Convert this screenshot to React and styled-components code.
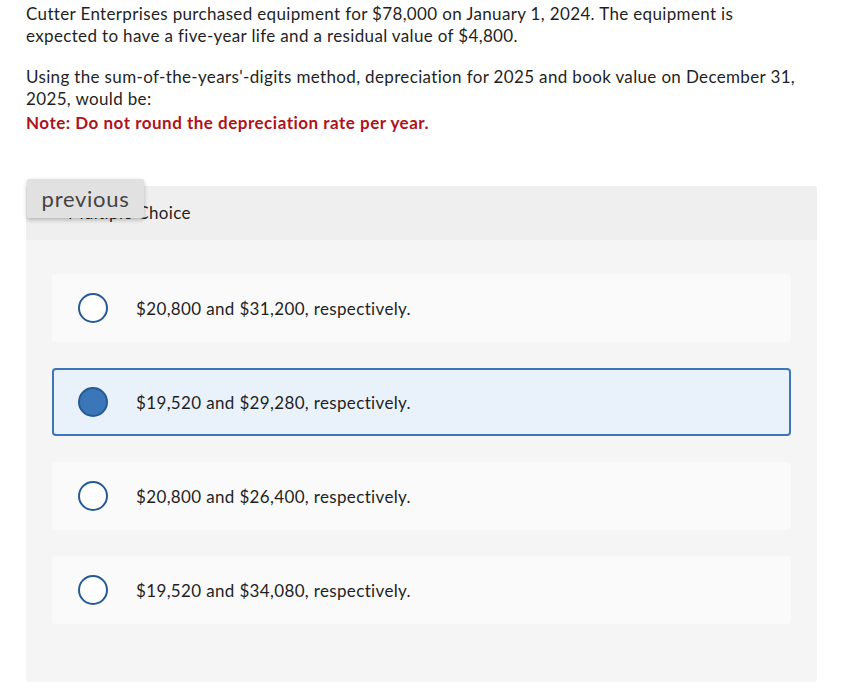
import React, { useState } from "react"
import styled, { createGlobalStyle } from "styled-components"

const GlobalStyle = createGlobalStyle`
  html, body {
    margin: 0;
    padding: 0;
    background: #fff;
  }
  body {
    font-family: Lato, "Open Sans", sans-serif;
    color: #1f1f1f;
    letter-spacing: 0.35px;
  }
`

const Page = styled.div`
  width: 844px;
  padding: 3px 26px 0 26px;
  box-sizing: border-box;
`

const Prompt = styled.div`
  font-size: 17px;
  line-height: 22px;
  padding-right: 10px;

  p {
    margin: 0 0 19px 0;
  }
`

const Note = styled.div`
  color: #b0121b;
  font-weight: 700;
  letter-spacing: 0.5px;
  margin-top: 2px;
`

const Panel = styled.section`
  position: relative;
  margin-top: 52px;
  width: 791px;
  background: #f5f5f5;
  border-radius: 3px;
`

const PanelHeader = styled.div`
  height: 54px;
  display: flex;
  align-items: center;
  padding-left: 42px;
  padding-bottom: 1px;
  box-sizing: border-box;
  background: #efefef;
  border-radius: 3px 3px 0 0;
  font-size: 17px;
`

const PreviousButton = styled.button`
  position: absolute;
  left: 1px;
  top: -7px;
  width: 117px;
  height: 39px;
  border: none;
  border-radius: 2px;
  background: #e1e1e1;
  color: #444;
  font-family: Lato, "Open Sans", sans-serif;
  font-size: 22px;
  letter-spacing: 0.7px;
  box-shadow: 0 2px 4px rgba(0, 0, 0, 0.25);
  cursor: pointer;
`

const Choices = styled.div`
  display: flex;
  flex-direction: column;
  gap: 26px;
  padding: 34px 26px 58px 26px;
`

const Choice = styled.label`
  height: 68px;
  box-sizing: border-box;
  display: flex;
  align-items: center;
  padding-left: ${p => (p.$selected ? "24px" : "26px")};
  gap: 28px;
  border-radius: 4px;
  background: ${p => (p.$selected ? "#e9f2fb" : "#fafafa")};
  border: ${p => (p.$selected ? "2px solid #3b76b8" : "none")};
  font-size: 17px;
  cursor: pointer;
`

const Radio = styled.span`
  width: 30px;
  height: 30px;
  box-sizing: border-box;
  border-radius: 50%;
  border: 2px solid #235a97;
  background: ${p => (p.$checked ? "#3b76b8" : "#fff")};
  flex-shrink: 0;
`

const options = [
  "$20,800 and $31,200, respectively.",
  "$19,520 and $29,280, respectively.",
  "$20,800 and $26,400, respectively.",
  "$19,520 and $34,080, respectively.",
]

const App = () => {
  const [picked, setPicked] = useState(1)

  return (
    <Page>
      <GlobalStyle />
      <Prompt>
        <p>
          Cutter Enterprises purchased equipment for $78,000 on January 1, 2024. The equipment is
          expected to have a five-year life and a residual value of $4,800.
        </p>
        Using the sum-of-the-years'-digits method, depreciation for 2025 and book value on December 31,
        2025, would be:
        <Note>Note: Do not round the depreciation rate per year.</Note>
      </Prompt>

      <Panel>
        <PanelHeader>Multiple Choice</PanelHeader>
        <PreviousButton>previous</PreviousButton>
        <Choices>
          {options.map((text, i) => (
            <Choice key={i} $selected={picked === i} onClick={() => setPicked(i)}>
              <Radio $checked={picked === i} />
              {text}
            </Choice>
          ))}
        </Choices>
      </Panel>
    </Page>
  )
}

export default App
